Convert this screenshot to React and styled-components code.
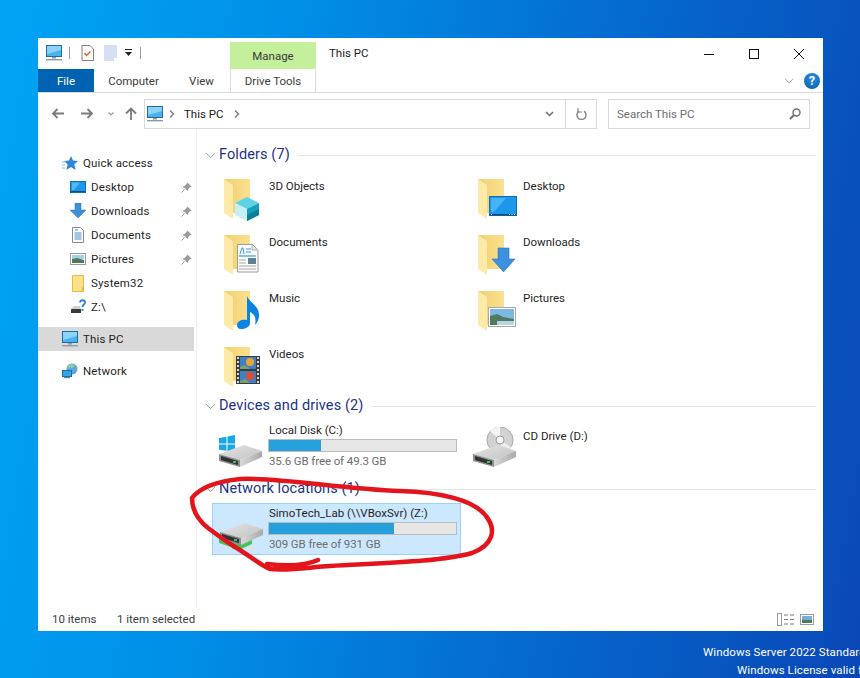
import React from 'react'
import styled, { createGlobalStyle } from 'styled-components'

const Global = createGlobalStyle`
  html, body { margin: 0; padding: 0; height: 100%; overflow: hidden; }
  body { font-family: Roboto, "Noto Sans", sans-serif; font-size: 11.5px; color: #1a1a1a; }
  svg { display: block; flex: none; }
`

const Desktop = styled.div`
  position: relative;
  width: 860px;
  height: 678px;
  overflow: hidden;
  box-sizing: border-box;
  padding: 38px 0 0 38px;
  background: linear-gradient(100deg, #00a4f4 0%, #008fe8 30%, #0567cb 68%, #0a47b6 100%);
`

const Watermark = styled.div`
  position: absolute;
  left: 703px;
  top: 643px;
  width: 200px;
  color: #fff;
  font-size: 11.5px;
  letter-spacing: 0.1px;
  line-height: 18px;
  white-space: nowrap;
`

const WatermarkLine = styled.div`
  padding-left: ${p => p.$indent || 0}px;
`

const Window = styled.div`
  position: relative;
  width: 785px;
  height: 593px;
  background: #fff;
  display: flex;
  flex-direction: column;
`

const TitleBar = styled.div`
  height: 31px;
  display: flex;
  align-items: flex-end;
  flex: none;
`

const QuickTools = styled.div`
  width: 192px;
  height: 31px;
  display: flex;
  align-items: center;
  gap: 7px;
  padding: 0 0 1px 8px;
  box-sizing: border-box;
`

const ToolSep = styled.span`
  width: 1px;
  height: 12px;
  background: #9a9a9a;
  margin-left: ${p => p.$ml || 0}px;
`

const ToolIcon = styled.span`
  margin-left: ${p => p.$ml || 0}px;
`

const ManageTab = styled.div`
  width: 86px;
  height: 27px;
  background: #c4ef9b;
  display: flex;
  align-items: center;
  justify-content: center;
  color: #3a3a3a;
`

const WindowTitle = styled.div`
  height: 31px;
  display: flex;
  align-items: center;
  padding: 0 0 1px 13px;
  color: #222;
`

const WindowButtons = styled.div`
  margin-left: auto;
  display: flex;
  height: 31px;
  align-items: center;
  padding-right: 2px;
`

const WindowButton = styled.div`
  width: 45px;
  display: flex;
  justify-content: center;
`

const RibbonTabs = styled.div`
  height: 23px;
  flex: none;
  display: flex;
  align-items: stretch;
  border-bottom: 1px solid #dadbdc;
`

const FileTab = styled.div`
  width: 56px;
  background: #0063b1;
  color: #fff;
  display: flex;
  align-items: center;
  justify-content: center;
`

const RibbonTab = styled.div`
  width: ${p => p.$width}px;
  display: flex;
  align-items: center;
  justify-content: center;
  color: #3c3c3c;
`

const ContextTab = styled(RibbonTab)`
  border-left: 1px solid #dadbdc;
  border-right: 1px solid #dadbdc;
  box-sizing: border-box;
`

const RibbonEnd = styled.div`
  margin-left: auto;
  display: flex;
  align-items: center;
  gap: 10px;
  padding-right: 3px;
`

const HelpBadge = styled.div`
  width: 16px;
  height: 16px;
  border-radius: 50%;
  background: radial-gradient(circle at 50% 30%, #2a8fe0, #0a5cae);
  color: #fff;
  font-size: 12px;
  font-weight: 700;
  line-height: 16px;
  text-align: center;
`

const AddressRow = styled.div`
  height: 36px;
  flex: none;
  display: flex;
  align-items: center;
  padding: 5px 13px 0 7px;
  box-sizing: border-box;
`

const NavButtons = styled.div`
  width: 99px;
  display: flex;
  align-items: center;
  padding-left: 6px;
  box-sizing: border-box;
`

const NavButton = styled.div`
  width: ${p => p.$width}px;
  display: flex;
`

const AddressBox = styled.div`
  width: 453px;
  height: 30px;
  box-sizing: border-box;
  border: 1px solid #d9d9d9;
  display: flex;
  align-items: center;
  padding-left: 2px;
  gap: 6px;
`

const Crumb = styled.span`
  color: #1a1a1a;
  padding: 0 4px 0 3px;
`

const AddressEnd = styled.div`
  margin-left: auto;
  display: flex;
  align-items: center;
  height: 100%;
`

const RefreshCell = styled.div`
  width: 30px;
  height: 100%;
  border-left: 1px solid #d9d9d9;
  margin-left: 11px;
  display: flex;
  align-items: center;
  justify-content: center;
`

const SearchBox = styled.div`
  width: 202px;
  height: 30px;
  box-sizing: border-box;
  margin-left: auto;
  border: 1px solid #d9d9d9;
  display: flex;
  align-items: center;
  justify-content: space-between;
  padding: 0 8px;
  color: #6d6d6d;
`

const Main = styled.div`
  flex: 1;
  display: flex;
  min-height: 0;
`

const Sidebar = styled.nav`
  width: 159px;
  flex: none;
  border-right: 1px solid #f0f0f0;
  padding-top: 22px;
  box-sizing: border-box;
`

const NavGroup = styled.div`
  margin-bottom: 8px;
`

const NavItem = styled.div`
  height: 24px;
  width: 156px;
  display: flex;
  align-items: center;
  box-sizing: border-box;
  padding: 0 0 0 ${p => (p.$sub ? 32 : 24)}px;
  gap: 5px;
  letter-spacing: 0.15px;
  background: ${p => (p.$active ? '#d9d9d9' : 'transparent')};
  color: #1f1f1f;
`

const NavIcon = styled.span`
  width: 16px;
  height: 16px;
  flex: none;
`

const Pin = styled.span`
  margin-left: auto;
  margin-right: 2px;
`

const Content = styled.div`
  flex: 1;
  padding: 14px 7px 0 8px;
  min-width: 0;
  box-sizing: border-box;
`

const Section = styled.section`
  margin-bottom: ${p => p.$gap || 0}px;
`

const SectionHead = styled.div`
  height: 22px;
  box-sizing: border-box;
  padding-top: 2px;
  display: flex;
  align-items: center;
  gap: 3px;
  color: #1e3287;
  font-size: 14.5px;
  letter-spacing: 0.1px;
  line-height: 20px;
  white-space: nowrap;
`

const SectionRule = styled.span`
  flex: 1;
  height: 1px;
  background: #e5e5e5;
  margin-left: 5px;
`

const FolderGrid = styled.div`
  display: grid;
  grid-template-columns: 254px 254px;
  grid-auto-rows: 56px;
  padding: 4px 0 0 18px;
`

const FolderItem = styled.div`
  display: flex;
  padding-top: 8px;
  height: 56px;
  box-sizing: border-box;
`

const FolderName = styled.div`
  padding-top: 1px;
  line-height: 16px;
  color: #1f1f1f;
`

const DriveGrid = styled.div`
  display: grid;
  grid-template-columns: 254px 254px;
  padding: 4px 0 0 7px;
`

const DriveItem = styled.div`
  width: 249px;
  height: 52px;
  box-sizing: border-box;
  display: flex;
  border: 1px solid ${p => (p.$selected ? '#99d1ff' : 'transparent')};
  background: ${p => (p.$selected ? '#cce8ff' : 'transparent')};
`

const DriveIconBox = styled.div`
  width: 56px;
  flex: none;
  display: flex;
  align-items: flex-end;
  padding: 0 0 2px 4px;
  box-sizing: border-box;
`

const DriveInfo = styled.div`
  flex: 1;
  padding-top: 1px;
  display: flex;
  flex-direction: column;
`

const DriveName = styled.div`
  line-height: 16px;
  color: #1f1f1f;
  white-space: nowrap;
`

const DriveCentered = styled(DriveName)`
  padding-top: 6px;
`

const DriveBar = styled.div`
  width: 189px;
  height: 13px;
  box-sizing: border-box;
  margin: 1px 0 1px -1px;
  background: #e6e6e6;
  border: 1px solid #bcbcbc;
`

const DriveFill = styled.div`
  height: 100%;
  background: #26a0da;
`

const DriveFree = styled.div`
  line-height: 17px;
  letter-spacing: -0.1px;
  color: #6d6d6d;
  white-space: nowrap;
`

const StatusBar = styled.div`
  height: 24px;
  flex: none;
  display: flex;
  align-items: center;
  padding: 0 9px 0 14px;
  color: #3c3c3c;
`

const StatusCount = styled.span`
  width: 65px;
`

const ViewIcons = styled.div`
  margin-left: auto;
  display: flex;
  align-items: center;
  gap: 6px;
`

const Scribble = styled.svg`
  position: absolute;
  left: 0;
  top: 0;
  pointer-events: none;
`

const Screen = ({ size = 16 }) => (
  <svg width={size} height={size} viewBox="0 0 16 16">
    <rect x="0.5" y="0.5" width="15" height="11" fill="#47b4f0" stroke="#1f6f9e" />
    <path d="M1 1h14v4L1 9z" fill="#8ad4f7" />
    <rect x="6" y="12" width="4" height="1.5" fill="#8f9aa3" />
    <rect x="0" y="14" width="16" height="1.4" fill="#8f9aa3" />
  </svg>
)

const DesktopSmall = () => (
  <svg width="16" height="16" viewBox="0 0 16 16">
    <rect x="0.5" y="2.5" width="15" height="11" fill="#1c97ea" stroke="#0e6fb5" />
    <path d="M2 3.5h8L4 11H2z" fill="#54b8f5" />
    <rect x="1" y="12" width="14" height="1" fill="#0b4f86" />
  </svg>
)

const ArrowDownSmall = () => (
  <svg width="16" height="16" viewBox="0 0 16 16">
    <path d="M5 0h6v7h5l-8 8-8-8h5z" fill="#3d8fdc" stroke="#2a75bd" strokeWidth="0.5" />
  </svg>
)

const DocSmall = () => (
  <svg width="16" height="16" viewBox="0 0 16 16">
    <path d="M2.5 0.5h8l3 3v12h-11z" fill="#fff" stroke="#8a8a8a" />
    <path d="M5 3h3M4.500 6h7M4.500 8h7M4.500 10h7M4.500 12h7" stroke="#3d8fc9" strokeWidth="1" />
  </svg>
)

const PictureSmall = () => (
  <svg width="16" height="16" viewBox="0 0 16 16">
    <rect x="0.5" y="2.5" width="15" height="11" fill="#fff" stroke="#9a9a9a" />
    <rect x="2" y="4" width="12" height="4" fill="#a8cfe8" />
    <path d="M2 8l5-1 7 2v3H2z" fill="#4e7a5c" />
  </svg>
)

const FolderSmall = () => (
  <svg width="16" height="18" viewBox="0 0 16 18">
    <path d="M2.500 0.500h11v16h-11z" fill="#fde08c" stroke="#e7bd3f" />
    <rect x="12" y="12" width="2" height="5" fill="#e7bd3f" />
  </svg>
)

const NetDriveSmall = () => (
  <svg width="16" height="16" viewBox="0 0 16 16">
    <path d="M1 10l3-3h6l1 3z" fill="#cfcfcf" />
    <rect x="1" y="10" width="10" height="4" rx="0.5" fill="#3a3a3a" />
    <path d="M10 3.500c0-3 5-3 5 0 0 2-2.500 2-2.500 4.500" fill="none" stroke="#2a7fd1" strokeWidth="1.800" />
    <rect x="11.600" y="10" width="1.800" height="2" fill="#2a7fd1" />
  </svg>
)

const Star = () => (
  <svg width="16" height="16" viewBox="0 0 16 16">
    <path d="M9 1l2 4.500 5 .5-3.700 3.200L13.500 15 9 12l-4.500 3 1.200-5.800L2 6l5-.5z" fill="#2b86d8" />
    <path d="M0 7h4M0 10h3M0 13h3" stroke="#8cc4ee" strokeWidth="1" />
  </svg>
)

const Network = () => (
  <svg width="16" height="16" viewBox="0 0 16 16">
    <circle cx="10" cy="6" r="5.500" fill="#5aa8dc" />
    <path d="M6 3c2-2 5-2 7 0l-3 2-2-1-1 2z" fill="#9ad09a" />
    <rect x="0.500" y="7.500" width="9" height="6" fill="#35a4ec" stroke="#1f6f9e" />
    <rect x="2" y="14" width="6" height="1.200" fill="#6e8494" />
  </svg>
)

const PinIcon = () => (
  <svg width="11" height="11" viewBox="0 0 11 11">
    <path d="M6.500 0.500l4 4-1.500.5-2 2.500L6.500 9 2 4.500l1.500-.5L5.500 2z" fill="#9a9a9a" />
    <path d="M3.500 7.500L0.500 10.500" stroke="#9a9a9a" />
  </svg>
)

const overlays = {
  cube: (
    <g>
      <path d="M24 20l12 6-12 6-12-6z" fill="#5fd3e6" />
      <path d="M12 26l12 6v12l-12-6z" fill="#c9eff3" />
      <path d="M36 26l-12 6v12l12-6z" fill="#12a0ba" />
      <path d="M36 32l-12 6v6l12-6z" fill="#0a7f96" />
    </g>
  ),
  doc: (
    <g>
      <path d="M14.500 11.500h15l5.500 5.500v22h-20.500z" fill="#fbfbfb" stroke="#9e9e9e" />
      <path d="M29 12v5h6" fill="#e2e2e2" stroke="#b5b5b5" />
      <path d="M23 16h5M23 19h5" stroke="#3a9bdc" />
      <path d="M17 21l2-6h1l1 6" fill="none" stroke="#3a9bdc" />
      <path d="M16 23h17" stroke="#3a9bdc" strokeWidth="1.200" />
      <rect x="25" y="25" width="8" height="6" fill="#5f8296" />
      <path d="M16 27h7M16 30h7M16 33h17M16 36h17" stroke="#a9a9a9" />
    </g>
  ),
  music: (
    <path d="M24 7c2 6 11 9 12 18 .4 4-1 8-4 11 1-5 1-10-5-13v11c0 4-5 6-9 6-3 0-4-2-4-4 0-4 5-6 10-5z" fill="#0a84e0" />
  ),
  film: (
    <g>
      <rect x="13" y="11" width="24" height="28" fill="#3c3c3c" />
      <path d="M14 13h2M14 17h2M14 21h2M14 25h2M14 29h2M14 33h2M14 37h2M34 13h2M34 17h2M34 21h2M34 25h2M34 29h2M34 33h2M34 37h2" stroke="#d8d8d8" strokeWidth="2" />
      <rect x="17" y="12" width="16" height="12" fill="#3f7fc4" />
      <rect x="17" y="26" width="16" height="12" fill="#3f7fc4" />
      <circle cx="27" cy="17" r="4" fill="#e8a33a" />
      <circle cx="27" cy="31" r="4" fill="#d9503a" />
      <path d="M17 22l5-2 4 3v1h-9zM17 36l5-2 4 3v1h-9z" fill="#7f9f6a" />
    </g>
  ),
  desktop: (
    <g>
      <rect x="12.500" y="19.500" width="27" height="19" fill="#1c97ea" stroke="#0e6fb5" />
      <path d="M14 21h15L17 35h-3z" fill="#45b3f5" />
      <rect x="13" y="37" width="26" height="1.500" fill="#0b4f86" />
      <path d="M14 37.500h1M32 37.500h1M34.500 37.500h1M37 37.500h1" stroke="#fff" />
    </g>
  ),
  down: <path d="M21 15h11v11h6L26.500 39 15 26h6z" fill="#3d90de" stroke="#2a75bd" strokeWidth="0.6" />,
  picture: (
    <g>
      <rect x="11.500" y="18.500" width="27" height="19" fill="#fff" stroke="#a8a8a8" />
      <rect x="13" y="20" width="24" height="16" fill="#7db7e2" />
      <path d="M13 27l7-2 6 3 11 2v6H13z" fill="#4f7a5e" />
      <path d="M20 32h17v4H20z" fill="#b9d6e8" />
    </g>
  ),
}

const FolderIcon = ({ kind }) => (
  <svg width="46" height="48" viewBox="0 0 46 48">
    <defs>
      <linearGradient id="fb" x1="0" x2="1" y1="0" y2="0">
        <stop offset="0" stopColor="#f0cf6e" />
        <stop offset="1" stopColor="#fbe18f" />
      </linearGradient>
    </defs>
    <path d="M1 2h26v34H10z" fill="url(#fb)" />
    <path d="M1 2l9 6v34l-9-6z" fill="#fde9a8" />
    {overlays[kind]}
  </svg>
)

const Hdd = ({ children, dx = 0, dy = 0 }) => (
  <svg width="48" height="42" viewBox="0 0 48 42">
    <defs>
      <linearGradient id="hddSide" x1="0" x2="1" y1="0" y2="0">
        <stop offset="0" stopColor="#d8d8d8" />
        <stop offset="1" stopColor="#a9a9a9" />
      </linearGradient>
      <linearGradient id="hddTop" x1="0" x2="1" y1="0" y2="1">
        <stop offset="0" stopColor="#e4e4e4" />
        <stop offset="1" stopColor="#c2c2c2" />
      </linearGradient>
    </defs>
    {children}
    <g transform={`translate(${dx} ${dy})`}>
      <path d="M2 27l25-9 18 6-22 9z" fill="url(#hddTop)" />
      <path d="M23 33l22-9v6l-22 10z" fill="url(#hddSide)" />
      <path d="M2 27l21 6v7L2 34z" fill="#8e8e8e" />
      <path d="M4 29l17 5v4L4 33z" fill="#333" />
      <rect x="16" y="34" width="3" height="2" fill="#3fc05a" />
    </g>
  </svg>
)

const WindowsLogo = () => (
  <path d="M2 11l7.500-1.300v6.800H2zM10.500 9.500L18 8v8.500h-7.500zM2 17.500h7.500v6.300L2 22.800zM10.500 17.500H18V25l-7.500-1.100z" fill="#18a8e8" />
)

const Disc = () => (
  <g>
    <circle cx="29" cy="13" r="13" fill="#d2d2d6" stroke="#a9a9a9" />
    <path d="M29 13L19 4a13 13 0 0 1 10-4z" fill="#f4f4f4" />
    <path d="M29 13l11 7a13 13 0 0 1-9 6z" fill="#ececec" />
    <circle cx="29" cy="13" r="4" fill="#f4f4f4" stroke="#9a9a9a" />
  </g>
)

const NetCable = () => (
  <g>
    <path d="M2 26l20 7 13-5v6l-13 6-6-1-2-2-12-4z" fill="#45c25a" />
    <rect x="31" y="36" width="6" height="5" rx="2.500" fill="#dfe3e3" />
  </g>
)

const Chevron = ({ w = 11, h = 7 }) => (
  <svg width={w} height={h} viewBox="0 0 13 8">
    <path d="M1 1l5.500 5.500L12 1" fill="none" stroke="#7f8a99" />
  </svg>
)

const CrumbArrow = () => (
  <svg width="6" height="8" viewBox="0 0 6 8">
    <path d="M1 0.500L4.500 4 1 7.500" fill="none" stroke="#808080" strokeWidth="1.500" />
  </svg>
)

const folders = [
  ['3D Objects', 'cube'],
  ['Desktop', 'desktop'],
  ['Documents', 'doc'],
  ['Downloads', 'down'],
  ['Music', 'music'],
  ['Pictures', 'picture'],
  ['Videos', 'film'],
]

const quickAccess = [
  ['Desktop', <DesktopSmall />, true],
  ['Downloads', <ArrowDownSmall />, true],
  ['Documents', <DocSmall />, true],
  ['Pictures', <PictureSmall />, true],
  ['System32', <FolderSmall />, false],
  ['Z:\\', <NetDriveSmall />, false],
]

export default function App() {
  return (
    <Desktop>
      <Global />
      <Window>
        <TitleBar>
          <QuickTools>
            <Screen />
            <ToolSep />
            <ToolIcon $ml={4}>
              <svg width="13" height="16" viewBox="0 0 13 16">
                <path d="M1 .5h8l3.500 3.500v11.500H1z" fill="#fff" stroke="#808080" />
                <path d="M3.500 8l2 2.500 4-4" fill="none" stroke="#e2622a" strokeWidth="1.500" />
              </svg>
            </ToolIcon>
            <ToolIcon $ml={3}>
              <svg width="13" height="16" viewBox="0 0 13 16">
                <rect x="0" y="0" width="13" height="16" fill="#d5e1f2" />
                <rect x="10" y="13" width="3" height="3" fill="#fff" />
              </svg>
            </ToolIcon>
            <ToolIcon $ml={1}>
              <svg width="8" height="8" viewBox="0 0 8 8">
                <path d="M0 0h7v1H0zM0 3h7L3.500 7z" fill="#222" />
              </svg>
            </ToolIcon>
            <ToolSep />
          </QuickTools>
          <ManageTab>Manage</ManageTab>
          <WindowTitle>This PC</WindowTitle>
          <WindowButtons>
            <WindowButton>
              <svg width="10" height="10" viewBox="0 0 10 10"><path d="M0 5.500h10" stroke="#111" /></svg>
            </WindowButton>
            <WindowButton>
              <svg width="10" height="10" viewBox="0 0 10 10"><rect x=".5" y=".5" width="9" height="9" fill="none" stroke="#111" /></svg>
            </WindowButton>
            <WindowButton>
              <svg width="10" height="10" viewBox="0 0 10 10"><path d="M0 0l10 10M10 0L0 10" stroke="#111" /></svg>
            </WindowButton>
          </WindowButtons>
        </TitleBar>
        <RibbonTabs>
          <FileTab>File</FileTab>
          <RibbonTab $width={79}>Computer</RibbonTab>
          <RibbonTab $width={57}>View</RibbonTab>
          <ContextTab $width={86}>Drive Tools</ContextTab>
          <RibbonEnd>
            <Chevron w={10} h={6} />
            <HelpBadge>?</HelpBadge>
          </RibbonEnd>
        </RibbonTabs>
        <AddressRow>
          <NavButtons>
            <NavButton $width={30}>
              <svg width="13" height="11" viewBox="0 0 13 11"><path d="M13 5.500H2M6.500 1L2 5.500 6.500 10" fill="none" stroke="#7a7a7a" strokeWidth="1.800" /></svg>
            </NavButton>
            <NavButton $width={27}>
              <svg width="13" height="11" viewBox="0 0 13 11"><path d="M0 5.500h11M6.500 1L11 5.500 6.500 10" fill="none" stroke="#7a7a7a" strokeWidth="1.800" /></svg>
            </NavButton>
            <NavButton $width={17}>
              <svg width="6" height="4" viewBox="0 0 6 4"><path d="M.5 .5L3 3 5.500 .5" fill="none" stroke="#9a9a9a" strokeWidth="1.200" /></svg>
            </NavButton>
            <NavButton $width={13}>
              <svg width="12" height="13" viewBox="0 0 12 13"><path d="M6 13V2M1 6.500L6 1.500l5 5" fill="none" stroke="#7a7a7a" strokeWidth="1.800" /></svg>
            </NavButton>
          </NavButtons>
          <AddressBox>
            <Screen />
            <CrumbArrow />
            <Crumb>This PC</Crumb>
            <CrumbArrow />
            <AddressEnd>
              <svg width="9" height="6" viewBox="0 0 9 6"><path d="M1 1l3.500 3.500L8 1" fill="none" stroke="#6d6d6d" strokeWidth="1.500" /></svg>
              <RefreshCell>
                <svg width="11" height="12" viewBox="0 0 11 12">
                  <path d="M3 3.200a4.500 4.500 0 1 0 5 0" fill="none" stroke="#8a8a8a" strokeWidth="1.500" />
                  <path d="M2 0v4h4" fill="none" stroke="#8a8a8a" strokeWidth="1.200" />
                </svg>
              </RefreshCell>
            </AddressEnd>
          </AddressBox>
          <SearchBox>
            Search This PC
            <svg width="12" height="12" viewBox="0 0 12 12">
              <circle cx="7.500" cy="4.500" r="3.500" fill="none" stroke="#6d6d6d" strokeWidth="1.400" />
              <path d="M5 7L1 11" stroke="#6d6d6d" strokeWidth="2" />
            </svg>
          </SearchBox>
        </AddressRow>
        <Main>
          <Sidebar>
            <NavGroup>
              <NavItem>
                <NavIcon><Star /></NavIcon>
                Quick access
              </NavItem>
              {quickAccess.map(([label, icon, pinned]) => (
                <NavItem key={label} $sub>
                  <NavIcon>{icon}</NavIcon>
                  {label}
                  {pinned && <Pin><PinIcon /></Pin>}
                </NavItem>
              ))}
            </NavGroup>
            <NavGroup>
              <NavItem $active>
                <NavIcon><Screen /></NavIcon>
                This PC
              </NavItem>
            </NavGroup>
            <NavGroup>
              <NavItem>
                <NavIcon><Network /></NavIcon>
                Network
              </NavItem>
            </NavGroup>
          </Sidebar>
          <Content>
            <Section $gap={1}>
              <SectionHead>
                <Chevron />
                Folders (7)
                <SectionRule />
              </SectionHead>
              <FolderGrid>
                {folders.map(([name, kind]) => (
                  <FolderItem key={name}>
                    <FolderIcon kind={kind} />
                    <FolderName>{name}</FolderName>
                  </FolderItem>
                ))}
              </FolderGrid>
            </Section>
            <Section $gap={5}>
              <SectionHead>
                <Chevron />
                Devices and drives (2)
                <SectionRule />
              </SectionHead>
              <DriveGrid>
                <DriveItem>
                  <DriveIconBox>
                    <Hdd><WindowsLogo /></Hdd>
                  </DriveIconBox>
                  <DriveInfo>
                    <DriveName>Local Disk (C:)</DriveName>
                    <DriveBar><DriveFill style={{ width: '28%' }} /></DriveBar>
                    <DriveFree>35.6 GB free of 49.3 GB</DriveFree>
                  </DriveInfo>
                </DriveItem>
                <DriveItem>
                  <DriveIconBox>
                    <Hdd><Disc /></Hdd>
                  </DriveIconBox>
                  <DriveInfo>
                    <DriveCentered>CD Drive (D:)</DriveCentered>
                  </DriveInfo>
                </DriveItem>
              </DriveGrid>
            </Section>
            <Section>
              <SectionHead>
                <Chevron />
                Network locations (1)
                <SectionRule />
              </SectionHead>
              <DriveGrid>
                <DriveItem $selected>
                  <DriveIconBox>
                    <Hdd dx={1} dy={-5}><NetCable /></Hdd>
                  </DriveIconBox>
                  <DriveInfo>
                    <DriveName>SimoTech_Lab (\\VBoxSvr) (Z:)</DriveName>
                    <DriveBar><DriveFill style={{ width: '67%' }} /></DriveBar>
                    <DriveFree>309 GB free of 931 GB</DriveFree>
                  </DriveInfo>
                </DriveItem>
              </DriveGrid>
            </Section>
          </Content>
        </Main>
        <StatusBar>
          <StatusCount>10 items</StatusCount>
          1 item selected
          <ViewIcons>
            <svg width="17" height="13" viewBox="0 0 17 13">
              <rect x=".5" y=".5" width="4" height="12" fill="none" stroke="#9a9a9a" />
              <path d="M7 2h4M13 2h4M7 6.500h4M13 6.500h4M7 11h4M13 11h4" stroke="#7a7a7a" />
            </svg>
            <svg width="14" height="11" viewBox="0 0 14 11">
              <rect x=".5" y=".5" width="13" height="10" fill="#fff" stroke="#9a9a9a" />
              <rect x="2" y="2" width="10" height="3.500" fill="#6fb0dc" />
              <path d="M2 5.500h10V9H2z" fill="#4f7a5e" />
            </svg>
          </ViewIcons>
        </StatusBar>
        <Scribble width="785" height="593" viewBox="38 38 785 593">
          <path
            d="M192 498C198 490 212 482 240 479C280 477 340 489 400 491C440 492 474 500 486 516C497 530 493 545 472 553C440 562 380 563 330 566C310 567 290 571 270 569C262 566 250 556 232 545C224 540 216 534 208 528C198 520 192 510 192 498M267 564C285 566 305 566 318 560"
            fill="none"
            stroke="#e3141c"
            strokeWidth="4.500"
            strokeLinecap="round"
            strokeLinejoin="round"
          />
        </Scribble>
      </Window>
      <Watermark>
        <WatermarkLine>Windows Server 2022 Standard</WatermarkLine>
        <WatermarkLine $indent={34}>Windows License valid for</WatermarkLine>
      </Watermark>
    </Desktop>
  )
}
